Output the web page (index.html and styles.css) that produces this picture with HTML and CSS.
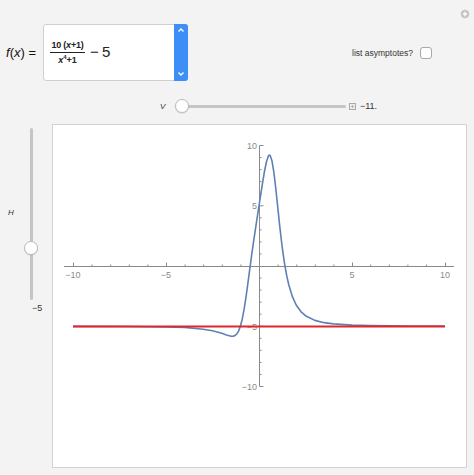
FILE: index.html
```html
<!DOCTYPE html>
<html>
<head>
<meta charset="utf-8">
<link rel="stylesheet" href="styles.css">
</head>
<body>
<div class="app">
  <svg class="addicon" width="10" height="10" viewBox="0 0 10 10"><circle cx="5" cy="5" r="4.3" fill="#c4c4c4"/><path d="M5 2.8V7.2M2.8 5H7.2" stroke="#fff" stroke-width="1.3"/></svg>
  <div class="top">
    <div class="fx"><i>f</i>(<i>x</i>) =</div>
    <div class="box">
      <div class="expr">
        <div class="frac">
          <div class="num">10 (<i>x</i>+1)</div>
          <div class="den"><i>x</i><sup>4</sup>+1</div>
        </div>
        <div class="minus">− 5</div>
      </div>
      <div class="spin">
        <svg width="8" height="6" viewBox="0 0 8 6"><path d="M1.5 4.5L4 2L6.5 4.5" fill="none" stroke="#fff" stroke-width="1.4"/></svg>
        <svg width="8" height="6" viewBox="0 0 8 6"><path d="M1.5 1.5L4 4L6.5 1.5" fill="none" stroke="#fff" stroke-width="1.4"/></svg>
      </div>
    </div>
    <div class="spacer"></div>
    <div class="asym">list asymptotes?</div>
    <div class="check"></div>
  </div>
  <div class="vrow">
    <div class="vlabel"><i>V</i></div>
    <div class="hslider"><div class="knob hknob"></div></div>
    <div class="pbtn"><svg width="7" height="7" viewBox="0 0 7 7"><rect x="0.5" y="0.5" width="6" height="6" fill="#eee" stroke="#aaa"/><path d="M3.5 2V5M2 3.5H5" stroke="#aaa" stroke-width="0.8"/></svg></div>
    <div class="vval">−11.</div>
  </div>
  <div class="main">
    <div class="side">
      <div class="hlabel"><i>H</i></div>
      <div class="vcol">
        <div class="vtrack"><div class="knob vknob"></div></div>
        <div class="vmin">−5</div>
      </div>
    </div>
    <div class="panel">
      <svg width="413" height="342" viewBox="53 125 413 342">
        <g stroke="#8a8a8a" stroke-width="1" fill="none">
          <path d="M64 266.5H454"/>
          <path d="M259.5 145.5V386.5"/>
          <path d="M73.5 266.5v-4M166.5 266.5v-4M352.5 266.5v-4M445.5 266.5v-4"/>
          <path d="M92.1 266.5v-2M110.7 266.5v-2M129.3 266.5v-2M147.9 266.5v-2M185.1 266.5v-2M203.7 266.5v-2M222.3 266.5v-2M240.9 266.5v-2M278.1 266.5v-2M296.7 266.5v-2M315.3 266.5v-2M333.9 266.5v-2M370.7 266.5v-2M389.3 266.5v-2M407.9 266.5v-2M426.5 266.5v-2"/>
          <path d="M259.5 145.5h4M259.5 205.75h4M259.5 326.25h4M259.5 386.5h4"/>
          <path d="M259.5 157.55h2M259.5 169.6h2M259.5 181.65h2M259.5 193.7h2M259.5 217.8h2M259.5 229.85h2M259.5 241.9h2M259.5 253.95h2M259.5 278.05h2M259.5 290.1h2M259.5 302.15h2M259.5 314.2h2M259.5 338.3h2M259.5 350.35h2M259.5 362.4h2M259.5 374.45h2"/>
        </g>
        <g class="tick" fill="#8a8a8a">
          <text x="73" y="278" text-anchor="middle">−10</text>
          <text x="166" y="278" text-anchor="middle">−5</text>
          <text x="352" y="278" text-anchor="middle">5</text>
          <text x="445" y="278" text-anchor="middle">10</text>
          <text x="257" y="149" text-anchor="end">10</text>
          <text x="257" y="209" text-anchor="end">5</text>
          <text x="257" y="329.5" text-anchor="end">−5</text>
          <text x="257" y="390" text-anchor="end">−10</text>
        </g>
        <polyline fill="none" stroke="#5e81b5" stroke-width="1.6" stroke-linejoin="round" points="73,326.36 128.8,326.55 166,327.02 184.6,327.41 203.2,329.19 212.5,330.76 221.8,333.34 226.45,334.96 231.1,336.19 232.96,336.2 234.82,335.62 236.68,334.1 238.54,331.14 240.4,326.25 242.26,318.97 244.12,309.15 245.98,297.1 247.84,283.58 249.7,269.54 251.56,255.76 253.42,242.57 255.28,230.01 257.14,217.81 259,205.75 260.86,193.71 262.72,181.88 264.58,170.85 266.44,161.77 268.3,156.13 269.23,155.14 270.16,155.57 272.02,161.06 273.88,172.37 275.74,188 277.6,205.75 279.46,223.56 281.32,240 283.18,254.37 285.04,266.52 286.9,276.56 288.76,284.77 292.48,296.91 296.2,304.98 300.85,311.55 305.5,315.72 314.8,320.37 324.1,322.66 333.4,323.9 352,325.09 370.6,325.6 407.8,325.98 445,326.12"/>
        <path d="M73 326.5H445" stroke="#e0262b" stroke-width="2"/>
      </svg>
    </div>
  </div>
</div>
</body>
</html>
```
FILE: styles.css
```css
html, body {
  margin: 0;
  padding: 0;
}
body {
  background: #f3f3f3;
  font-family: "Liberation Sans", Arial, sans-serif;
  color: #222;
}
.app {
  position: relative;
  width: 474px;
  height: 475px;
  overflow: hidden;
  background: #f3f3f3;
}
.addicon {
  position: absolute;
  left: 460px;
  top: 9px;
}
.top {
  display: flex;
  align-items: center;
  height: 57px;
  padding: 24px 42px 0 6px;
}
.fx {
  width: 37px;
  font-size: 13px;
  color: #111;
}
.box {
  width: 145px;
  height: 57px;
  box-sizing: border-box;
  background: #fff;
  border: 1px solid #cfcfcf;
  border-radius: 3px;
  display: flex;
}
.expr {
  flex: 1;
  display: flex;
  align-items: center;
  padding-left: 6px;
}
.frac {
  display: flex;
  flex-direction: column;
  align-items: center;
  width: 35px;
}
.num {
  font-size: 9px;
  line-height: 11px;
  padding: 0 1px 1px;
  border-bottom: 1px solid #222;
  font-weight: bold;
  letter-spacing: -0.2px;
}
.den {
  font-size: 9px;
  line-height: 11px;
  padding-top: 2px;
  font-weight: bold;
}
.den sup {
  font-size: 6px;
  vertical-align: 4px;
  line-height: 0;
}
.minus {
  font-size: 15px;
  margin-left: 5px;
  margin-top: -2px;
  letter-spacing: -0.5px;
}
.spin {
  width: 14px;
  margin: -1px -1px -1px 0;
  background: #3d8ef6;
  border-radius: 0 3px 3px 0;
  display: flex;
  flex-direction: column;
  justify-content: space-between;
  align-items: center;
  padding: 3px 0 4px;
}
.spin svg {
  display: block;
}
.spacer {
  flex: 1;
}
.asym {
  font-size: 8.5px;
  color: #333;
  margin-right: 7px;
}
.check {
  width: 12px;
  height: 12px;
  box-sizing: border-box;
  border: 1px solid #a8a8a8;
  border-radius: 3px;
  background: #fff;
}
.vrow {
  display: flex;
  align-items: center;
  height: 14px;
  margin-top: 18px;
  padding-left: 160px;
}
.vlabel {
  width: 16px;
  font-size: 8px;
  color: #333;
}
.hslider {
  position: relative;
  width: 170px;
  height: 3px;
  background: #c5c5c5;
  border-radius: 2px;
}
.knob {
  position: absolute;
  width: 14px;
  height: 14px;
  box-sizing: border-box;
  border-radius: 50%;
  background: #fff;
  border: 1px solid #bdbdbd;
  box-shadow: 0 0.5px 1px rgba(0,0,0,0.15);
}
.hknob {
  left: -1px;
  top: -5.5px;
}
.pbtn {
  margin-left: 3px;
  height: 7px;
}
.pbtn svg {
  display: block;
}
.vval {
  margin-left: 4px;
  font-size: 9px;
  color: #333;
}
.main {
  display: flex;
  margin-top: 11px;
  height: 344px;
}
.side {
  width: 52px;
  display: flex;
  align-items: flex-start;
  padding-top: 4px;
  box-sizing: border-box;
}
.hlabel {
  width: 16px;
  padding-left: 8px;
  margin-top: 80px;
  font-size: 8px;
  line-height: 10px;
  color: #333;
}
.vcol {
  width: 14px;
  display: flex;
  flex-direction: column;
}
.vtrack {
  position: relative;
  width: 3px;
  height: 172px;
  margin-left: 5.5px;
  background: #c5c5c5;
  border-radius: 2px;
}
.vknob {
  left: -5.5px;
  top: 113px;
}
.vmin {
  margin-top: 3px;
  margin-left: 8px;
  font-size: 9px;
  line-height: 10px;
  color: #333;
}
.panel {
  width: 415px;
  height: 344px;
  box-sizing: border-box;
  background: #fff;
  border: 1px solid #d2d2d2;
}
.panel svg {
  display: block;
}
.tick text {
  font-family: "Liberation Sans", Arial, sans-serif;
  font-size: 9px;
}
```
